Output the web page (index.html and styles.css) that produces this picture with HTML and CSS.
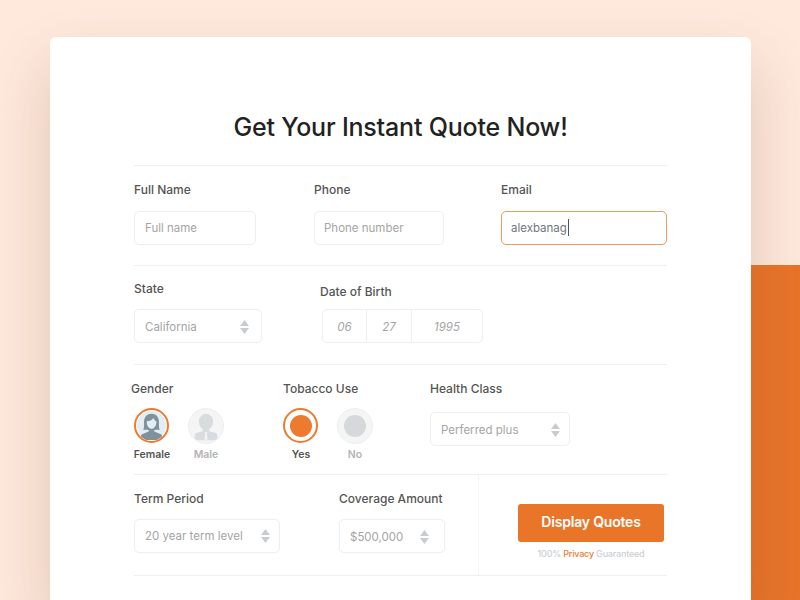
FILE: index.html
```html
<!DOCTYPE html>
<html lang="en">
<head>
    <meta charset="UTF-8">
    <title>Get Your Instant Quote Now!</title>
    <link rel="stylesheet" href="styles.css">
</head>
<body>
    <div class="accent-block"></div>

    <div class="card">
        <h1 class="title">Get Your Instant Quote Now!</h1>

        <!-- Contact -->
        <div class="row row-contact">
            <div class="field w-name">
                <div class="label">Full Name</div>
                <div class="box placeholder">Full name</div>
            </div>
            <div class="field w-phone">
                <div class="label">Phone</div>
                <div class="box placeholder pad-phone">Phone number</div>
            </div>
            <div class="field w-email">
                <div class="label">Email</div>
                <div class="box box-focus pad-phone">alexbanag<span class="caret"></span></div>
            </div>
        </div>

        <!-- State and birth date -->
        <div class="row row-state">
            <div class="field w-state">
                <div class="label">State</div>
                <div class="box select placeholder pad-state">California
                    <svg class="updown" width="9" height="14" viewBox="0 0 9 14"><path d="M4.500 0L9 6H0zM0 8h9l-4.500 6z"/></svg>
                </div>
            </div>
            <div class="field w-dob">
                <div class="label label-dob">Date of Birth</div>
                <div class="box date">
                    <div class="date-part part-month">06</div>
                    <div class="date-part part-day">27</div>
                    <div class="date-part part-year">1995</div>
                </div>
            </div>
        </div>

        <!-- Gender, tobacco, health -->
        <div class="row row-choice">
            <div class="field w-gender">
                <div class="label label-gender">Gender</div>
                <div class="options">
                    <div class="option">
                        <div class="avatar avatar-on">
                            <svg width="29" height="29" viewBox="0 0 31 31">
                                <circle cx="15.500" cy="15.500" r="15.500" fill="#e2eef3"/>
                                <path d="M15.500 3C10 3 7.500 7 7.500 12c0 3 .5 6-1 8h5c1 1 2.500 1.500 4 1.500s3-.5 4-1.500h5c-1.500-2-1-5-1-8 0-5-2.500-9-8-9z" fill="#7f929c"/>
                                <path d="M10.500 11c3 0 5.500-1 7-3.500 1 2 2 3 3.200 3.700.3 4-2.200 7.800-5.200 7.800s-5.300-3.500-5-8z" fill="#e2eef3"/>
                                <path d="M12.500 20.500v1.500L6 24.500c-1 .5-1.500 1-2 2.500a15.500 15.500 0 0 0 23 0c-.5-1.500-1-2-2-2.500L18.500 22v-1.500c-2 1-4 1-6 0z" fill="#7f929c"/>
                            </svg>
                        </div>
                        <div class="option-name on">Female</div>
                    </div>
                    <div class="option option-next">
                        <div class="avatar">
                            <svg width="36" height="36" viewBox="0 0 36 36">
                                <ellipse cx="18" cy="13.500" rx="7.500" ry="8.500" fill="#d8dcde"/>
                                <path d="M14.500 21v2.500L8 25.500c-1.500.5-2 1.500-2 3V33h24v-4.500c0-1.500-.5-2.500-2-3l-6.500-2V21z" fill="#d8dcde"/>
                                <path d="M16.500 24.500h3l-.7 2 .9 6h-3.400l.9-6z" fill="#f4f5f5"/>
                            </svg>
                        </div>
                        <div class="option-name">Male</div>
                    </div>
                </div>
            </div>
            <div class="field w-tobacco">
                <div class="label">Tobacco Use</div>
                <div class="options">
                    <div class="option">
                        <div class="radio radio-on"><span class="dot"></span></div>
                        <div class="option-name on">Yes</div>
                    </div>
                    <div class="option option-next">
                        <div class="radio"><span class="dot"></span></div>
                        <div class="option-name">No</div>
                    </div>
                </div>
            </div>
            <div class="field w-health">
                <div class="label label-health">Health Class</div>
                <div class="box select placeholder pad-health">Perferred plus
                    <svg class="updown" width="9" height="14" viewBox="0 0 9 14"><path d="M4.500 0L9 6H0zM0 8h9l-4.500 6z"/></svg>
                </div>
            </div>
        </div>

        <!-- Term and submit -->
        <div class="row row-term">
            <div class="field w-term">
                <div class="label">Term Period</div>
                <div class="box select placeholder pad-term">20 year term level
                    <svg class="updown" width="9" height="14" viewBox="0 0 9 14"><path d="M4.500 0L9 6H0zM0 8h9l-4.500 6z"/></svg>
                </div>
            </div>
            <div class="field w-amount">
                <div class="label">Coverage Amount</div>
                <div class="box select placeholder pad-amount">$500,000
                    <svg class="updown" width="9" height="14" viewBox="0 0 9 14"><path d="M4.500 0L9 6H0zM0 8h9l-4.500 6z"/></svg>
                </div>
            </div>
            <div class="submit-col">
                <button class="btn">Display Quotes</button>
                <div class="privacy">100% <span class="privacy-word">Privacy</span> Guaranteed</div>
            </div>
        </div>
    </div>
</body>
</html>
```

FILE: styles.css
```css
html, body {
    height: 100%;
}

body {
    font-family: 'Inter', 'Liberation Sans', sans-serif;
    background-color: #fee9dc;
    color: #555;
    margin: 0;
    overflow: hidden;
}

.accent-block {
    position: absolute;
    top: 265px;
    left: 700px;
    right: 0;
    bottom: 0;
    background-color: #e8742a;
}

.card {
    position: relative;
    box-sizing: border-box;
    width: 701px;
    height: 563px;
    margin: 37px 0 0 50px;
    padding: 0 84px;
    background: white;
    border-radius: 6px 6px 0 0;
    box-shadow: 0 30px 60px rgba(120, 70, 40, 0.22);
}

.title {
    margin: 0;
    height: 129px;
    box-sizing: border-box;
    padding-top: 71px;
    font-size: 25px;
    line-height: 38px;
    font-weight: 500;
    color: #222;
    text-align: center;
    letter-spacing: -0.2px;
    border-bottom: 1px solid #f0f0f0;
}

.row {
    display: flex;
    box-sizing: border-box;
    border-bottom: 1px solid #f0f0f0;
    padding-top: 16px;
}

.row-contact {
    height: 100px;
}

.row-state {
    height: 99px;
    padding-top: 15px;
}

.row-choice {
    height: 110px;
}

.row-term {
    height: 101px;
}

.label {
    height: 16px;
    margin-bottom: 13px;
    font-size: 12px;
    line-height: 16px;
    font-weight: 500;
    color: #555;
    white-space: nowrap;
}

.row-state .label,
.row-term .label {
    margin-bottom: 12px;
}

.row-state .label-dob {
    margin: 3px 0 9px -2px;
}

.row-choice .label {
    margin-bottom: 11px;
}

.row-choice .label-gender {
    margin-left: -3px;
}

.row-choice .label-health {
    margin-bottom: 15px;
}

.box {
    box-sizing: border-box;
    height: 34px;
    border: 1px solid #eee;
    border-radius: 5px;
    font-size: 11.500px;
    line-height: 32px;
    padding-left: 10px;
    white-space: nowrap;
}

.placeholder {
    color: #a5a5a5;
}

.pad-phone {
    padding-left: 9px;
}

.box-focus {
    border-color: #f0995c;
    color: #6e7780;
}

.caret {
    display: inline-block;
    width: 1px;
    height: 17px;
    margin-left: 1px;
    vertical-align: -4px;
    background-color: #555;
}

.select {
    display: flex;
    justify-content: space-between;
    align-items: center;
}

.pad-state {
    padding-top: 1px;
    padding-right: 12px;
}

.pad-health {
    padding-top: 1px;
    padding-right: 9px;
}

.pad-term {
    padding-right: 9px;
}

.pad-amount {
    padding-top: 1px;
    padding-right: 15px;
}

.updown {
    fill: #c9cccf;
}

.w-name {
    width: 122px;
    margin-right: 58px;
}

.w-phone {
    width: 130px;
    margin-right: 57px;
}

.w-email {
    width: 166px;
}

.w-state {
    width: 128px;
    margin-right: 60px;
}

.w-dob {
    width: 161px;
}

.date {
    display: flex;
    padding: 1px 0 0;
}

.date-part {
    box-sizing: border-box;
    height: 32px;
    margin-top: -1px;
    padding-top: 1px;
    font-style: italic;
    color: #a5a5a5;
    text-align: center;
    border-right: 1px solid #eee;
}

.part-month {
    width: 44px;
}

.part-day {
    width: 45px;
}

.part-year {
    flex: 1;
    border-right: none;
}

.w-gender {
    width: 149px;
}

.w-tobacco {
    width: 147px;
}

.w-health {
    width: 140px;
}

.options {
    display: flex;
}

.option {
    display: flex;
    flex-direction: column;
    align-items: center;
    width: 36px;
}

.option-next {
    margin-left: 18px;
}

.avatar,
.radio {
    box-sizing: border-box;
    width: 36px;
    height: 36px;
    border-radius: 50%;
    overflow: hidden;
    background-color: #f4f5f5;
    border: 1px solid #eeeeee;
    display: flex;
    align-items: center;
    justify-content: center;
    flex-shrink: 0;
}

.avatar-on,
.radio-on {
    align-self: flex-start;
    width: 35px;
    height: 35px;
    margin-bottom: 1px;
    background-color: white;
    border: 2px solid #ec7a2f;
}

.radio .dot {
    width: 22px;
    height: 22px;
    border-radius: 50%;
    background-color: #d6d9dc;
}

.radio-on .dot {
    background-color: #ec7a2f;
}

.option-name {
    margin-top: 4px;
    font-size: 10.500px;
    line-height: 14px;
    font-weight: 600;
    color: #b4b4b4;
    white-space: nowrap;
}

.option-name.on {
    color: #555;
}

.w-term {
    width: 146px;
    margin-right: 59px;
}

.w-amount {
    width: 106px;
}

.submit-col {
    flex: 1;
    margin: -16px 0 0 33px;
    padding: 29px 3px 0 39px;
    border-left: 1px solid #f4f4f4;
    display: flex;
    flex-direction: column;
    align-items: center;
}

.btn {
    flex-shrink: 0;
    width: 146px;
    height: 38px;
    padding: 0 0 3px;
    background-color: #e97528;
    color: white;
    border: none;
    border-radius: 3px;
    font-family: inherit;
    font-size: 14px;
    font-weight: 600;
    letter-spacing: -0.2px;
    cursor: pointer;
}

.privacy {
    margin-top: 5px;
    font-size: 9px;
    line-height: 14px;
    font-weight: 500;
    letter-spacing: -0.2px;
    color: #ccd0d4;
    white-space: nowrap;
}

.privacy-word {
    color: #ec7a2f;
}
```
